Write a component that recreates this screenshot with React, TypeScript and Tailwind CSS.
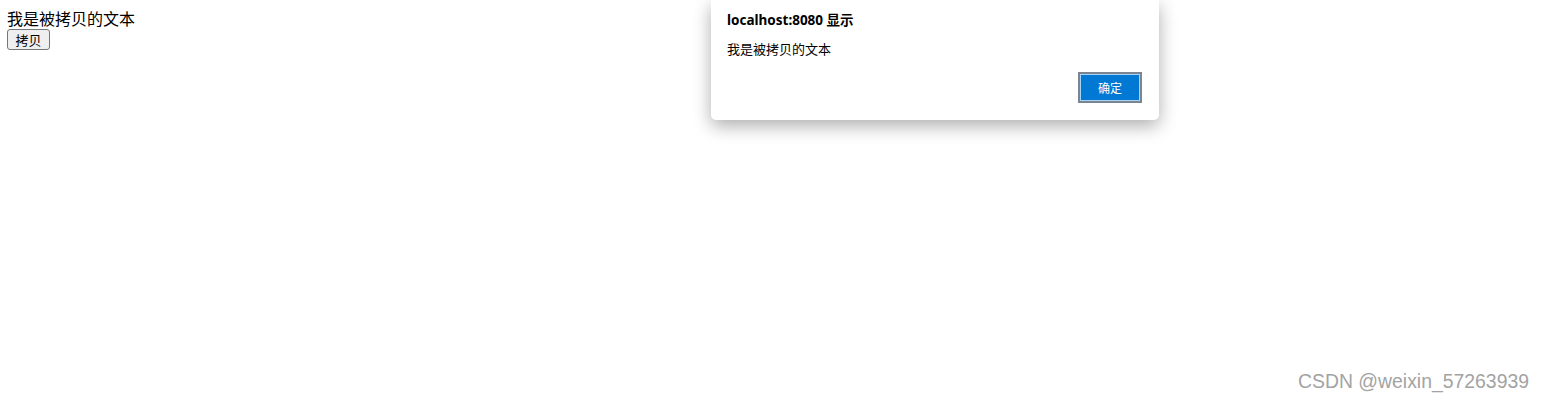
export default function App() {
  return (
    <div className="relative w-full h-[401px] bg-white overflow-hidden">
      <div className="pl-[7px] pt-[8px] flex flex-col items-start">
        <div className="text-[16px] leading-[21px] text-black font-['Microsoft_YaHei','Noto_Sans_CJK_SC',sans-serif]">
          我是被拷贝的文本
        </div>
        <button className="w-[43px] h-[21px] border border-[#767676] rounded-[3px] bg-[#efefef] text-[13px] leading-[19px] text-black flex items-center justify-center font-['Noto_Sans_CJK_SC',sans-serif]">
          拷贝
        </button>
      </div>

      <div className="absolute top-0 left-[711px] w-[448px] bg-white rounded-b-[5px] shadow-[0_6px_18px_rgba(0,0,0,0.32)] pl-[16px] pr-[17px] pt-[11px] pb-[17px] flex flex-col">
        <div className="h-[19px] leading-[19px] text-[13.5px] font-bold text-black font-['Noto_Sans','Noto_Sans_CJK_SC',sans-serif]">
          localhost:8080 显示
        </div>
        <div className="mt-[10px] h-[18px] leading-[18px] text-[13px] text-black font-['Noto_Sans_CJK_SC',sans-serif]">
          我是被拷贝的文本
        </div>
        <div className="mt-[14px] flex justify-end">
          <button className="w-[64px] h-[31px] border-2 border-[#7a8591] bg-[#0078d4] shadow-[inset_0_0_0_1px_#a8d3f5] text-white text-[12px] flex items-center justify-center font-['Noto_Sans_CJK_SC',sans-serif]">
            确定
          </button>
        </div>
      </div>

      <div className="absolute right-[16px] bottom-[9px] text-[19.4px] leading-[22px] text-[#a3a3a3] font-['Liberation_Sans',Arial,sans-serif]">
        CSDN @weixin_57263939
      </div>
    </div>
  );
}
